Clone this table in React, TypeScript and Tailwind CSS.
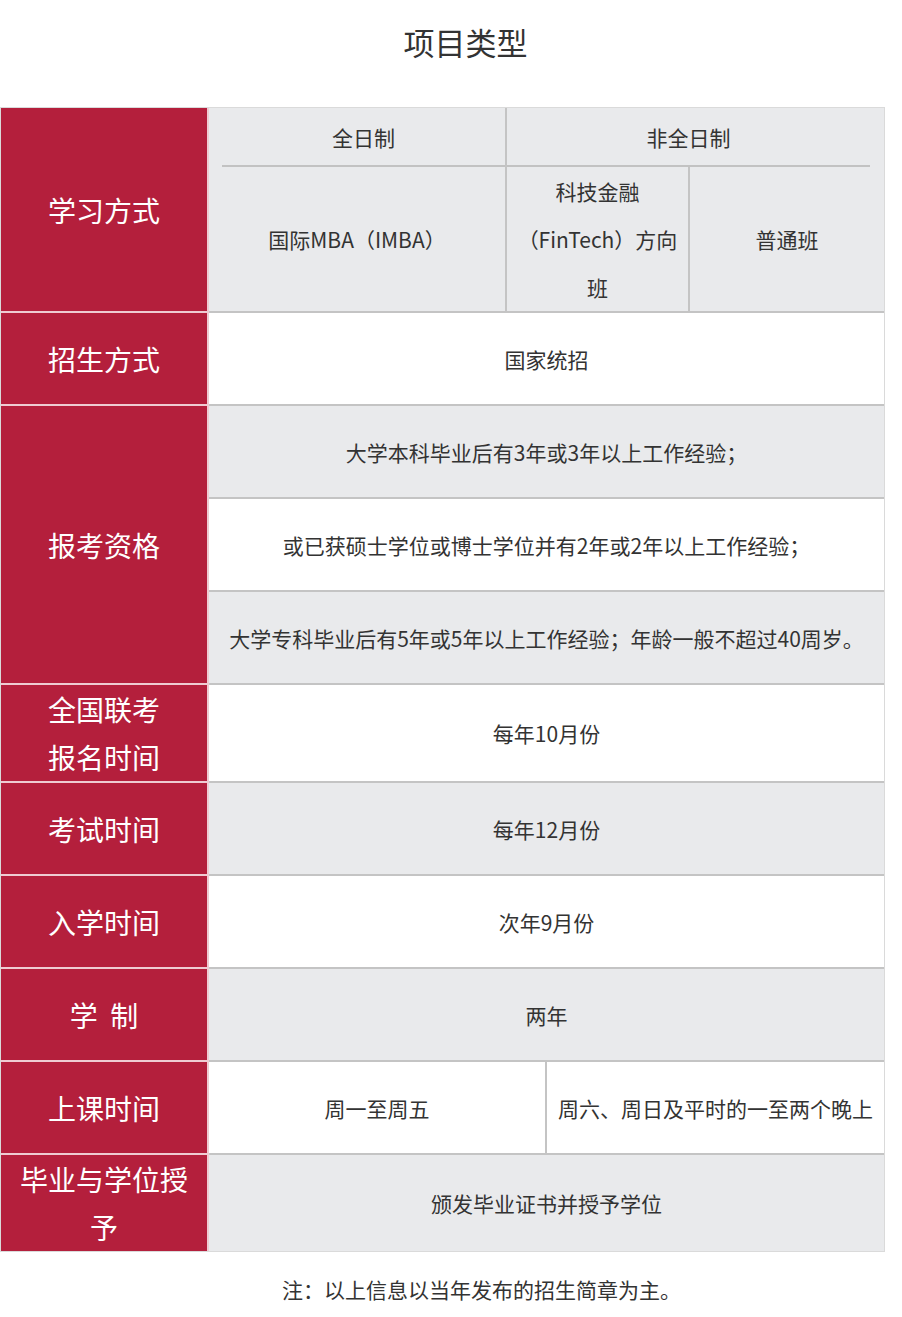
import type { ReactNode } from 'react';

const LINE = 'border-[#c4c4c4]';

function Label({ children, last = false }: { children: ReactNode; last?: boolean }) {
  return (
    <div
      className={`w-[208px] shrink-0 bg-[#b41f3c] border-r-2 border-[#efcbd2] ${
        last ? '' : 'border-b-2'
      } flex items-center justify-center text-center text-white text-[28px] leading-[48px]`}
    >
      {children}
    </div>
  );
}

function Cell({
  children,
  gray = false,
  last = false,
  className = '',
}: {
  children: ReactNode;
  gray?: boolean;
  last?: boolean;
  className?: string;
}) {
  return (
    <div
      className={`min-h-[93px] flex items-center justify-center text-center px-3 ${LINE} ${
        last ? '' : 'border-b-2'
      } ${gray ? 'bg-[#e9eaec]' : 'bg-white'} ${className}`}
    >
      {children}
    </div>
  );
}

function Row({ label, children, last = false }: { label: ReactNode; children: ReactNode; last?: boolean }) {
  return (
    <div className="flex">
      <Label last={last}>{label}</Label>
      <div className="flex-1 flex flex-col">{children}</div>
    </div>
  );
}

export default function App() {
  return (
    <div className="w-[902px] bg-white text-[#333] [font-family:'Microsoft_YaHei','Noto_Sans_CJK_SC',sans-serif]">
      <div className="w-[885px] pl-[46px] pt-[22px] pb-[45px] text-center text-[31px] leading-[40px]">项目类型</div>

      <div className="w-[885px] border border-[#dadada] text-[21px] leading-[48px]">
        {/* 学习方式 */}
        <div className="flex">
          <Label>学习方式</Label>
          <div className={`flex-1 flex bg-[#e9eaec] border-b-2 ${LINE}`}>
            <div className={`w-[298px] flex flex-col border-r-2 ${LINE}`}>
              <div className="h-[57px] pl-[13px] flex items-center justify-center">全日制</div>
              <div className="h-[2px] bg-[#c2c2c2] ml-[13px]" />
              <div className="h-[144px] flex items-center justify-center">国际MBA（IMBA）</div>
            </div>
            <div className="flex-1 flex flex-col">
              <div className="h-[57px] pr-[14px] flex items-center justify-center">非全日制</div>
              <div className="h-[2px] bg-[#c2c2c2] mr-[14px]" />
              <div className="h-[144px] flex">
                <div className={`w-[183px] border-r-2 ${LINE} flex items-center justify-center text-center`}>
                  <div>
                    科技金融
                    <br />
                    （FinTech）方向
                    <br />班
                  </div>
                </div>
                <div className="flex-1 flex items-center justify-center">普通班</div>
              </div>
            </div>
          </div>
        </div>

        <Row label="招生方式">
          <Cell>国家统招</Cell>
        </Row>

        <Row label="报考资格">
          <Cell gray>大学本科毕业后有3年或3年以上工作经验；</Cell>
          <Cell>或已获硕士学位或博士学位并有2年或2年以上工作经验；</Cell>
          <Cell gray>大学专科毕业后有5年或5年以上工作经验；年龄一般不超过40周岁。</Cell>
        </Row>

        <Row
          label={
            <div>
              全国联考
              <br />
              报名时间
            </div>
          }
        >
          <Cell className="flex-1">每年10月份</Cell>
        </Row>

        <Row label="考试时间">
          <Cell gray>每年12月份</Cell>
        </Row>

        <Row label="入学时间">
          <Cell>次年9月份</Cell>
        </Row>

        <Row label={<span>学&nbsp;&nbsp;制</span>}>
          <Cell gray>两年</Cell>
        </Row>

        <Row label="上课时间">
          <div className={`flex min-h-[93px] border-b-2 ${LINE} bg-white`}>
            <div className={`w-[338px] border-r-2 ${LINE} flex items-center justify-center`}>周一至周五</div>
            <div className="flex-1 flex items-center justify-center whitespace-nowrap">周六、周日及平时的一至两个晚上</div>
          </div>
        </Row>

        <Row
          last
          label={
            <div>
              毕业与学位授
              <br />予
            </div>
          }
        >
          <Cell gray last className="flex-1">
            颁发毕业证书并授予学位
          </Cell>
        </Row>
      </div>

      <div className="w-[885px] pl-[78px] pt-[13px] pb-[20px] text-center text-[21px] leading-[48px]">
        注：以上信息以当年发布的招生简章为主。
      </div>
    </div>
  );
}
